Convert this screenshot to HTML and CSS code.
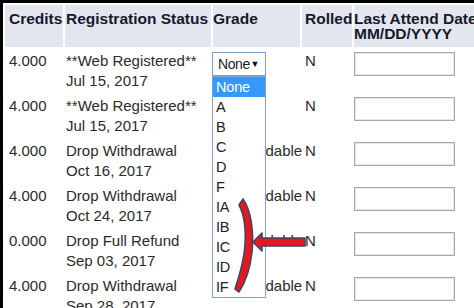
FILE: index.html
```html
<!DOCTYPE html>
<html lang="en">
<head>
<meta charset="UTF-8">
<meta name="viewport" content="width=device-width, initial-scale=1.0">
<title>Registration - Grades</title>
<link rel="stylesheet" href="styles.css">
</head>
<body>

<table class="reg-table">
  <thead>
    <tr>
      <th class="col-credits">Credits</th>
      <th class="col-status">Registration Status</th>
      <th class="col-grade">Grade</th>
      <th class="col-rolled">Rolled</th>
      <th class="col-attend">Last Attend Date<br>MM/DD/YYYY</th>
    </tr>
  </thead>
  <tbody>
    <tr>
      <td class="credits">4.000</td>
      <td class="status">**Web Registered**<br>Jul 15, 2017</td>
      <td class="grade">
        <div class="grade-select is-open">
          <span>None</span><span class="caret">&#9660;</span>
          <!-- open dropdown list -->
          <ul class="grade-list">
            <li class="selected">None</li>
            <li>A</li>
            <li>B</li>
            <li>C</li>
            <li>D</li>
            <li>F</li>
            <li>IA</li>
            <li>IB</li>
            <li>IC</li>
            <li>ID</li>
            <li>IF</li>
          </ul>
        </div>
      </td>
      <td class="rolled">N</td>
      <td class="attend"><input type="text" class="date-input"></td>
    </tr>
    <tr>
      <td class="credits">4.000</td>
      <td class="status">**Web Registered**<br>Jul 15, 2017</td>
      <td class="grade">
        <div class="grade-select"><span>None</span><span class="caret">&#9660;</span></div>
      </td>
      <td class="rolled">N</td>
      <td class="attend"><input type="text" class="date-input"></td>
    </tr>
    <tr>
      <td class="credits">4.000</td>
      <td class="status">Drop Withdrawal<br>Oct 16, 2017</td>
      <td class="grade">Not Gradable</td>
      <td class="rolled">N</td>
      <td class="attend"><input type="text" class="date-input"></td>
    </tr>
    <tr>
      <td class="credits">4.000</td>
      <td class="status">Drop Withdrawal<br>Oct 24, 2017</td>
      <td class="grade">Not Gradable</td>
      <td class="rolled">N</td>
      <td class="attend"><input type="text" class="date-input"></td>
    </tr>
    <tr>
      <td class="credits">0.000</td>
      <td class="status">Drop Full Refund<br>Sep 03, 2017</td>
      <td class="grade">Not Gradable</td>
      <td class="rolled">N</td>
      <td class="attend"><input type="text" class="date-input"></td>
    </tr>
    <tr>
      <td class="credits">4.000</td>
      <td class="status">Drop Withdrawal<br>Sep 28, 2017</td>
      <td class="grade">Not Gradable</td>
      <td class="rolled">N</td>
      <td class="attend"><input type="text" class="date-input"></td>
    </tr>
  </tbody>
</table>

<!-- red annotation arrows drawn over the page -->
<svg class="annotation" width="474" height="308" viewBox="0 0 474 308">
  <path d="M243 199 C251 210, 254 232, 252 252 C250 270, 245 283, 239 292 L235 289 C239 277, 244 262, 245 245 C246 228, 244 214, 239 205 Z"
        fill="#e8161e" stroke="#3d4766" stroke-width="1.6" stroke-linejoin="round"/>
  <path d="M253 242 L262 233 L262 238 L305 238 L305 246 L262 246 L262 251 Z"
        fill="#e8161e" stroke="#3d4766" stroke-width="1.6" stroke-linejoin="round"/>
</svg>

</body>
</html>
```

FILE: styles.css
```css
html, body {
    margin: 0;
    height: 100%;
    overflow: hidden;
    background: #fff;
  }
  body {
    position: relative;
    font-family: "Liberation Sans", Arial, sans-serif;
  }
  .reg-table {
    border: 3px solid #000;
    border-spacing: 2px;
    table-layout: fixed;
    width: 499px;
    font-size: 15px;
    color: #2b2b2b;
  }
  .reg-table th {
    box-sizing: border-box;
    background-color: #e3e6ef;
    color: #141a2c;
    font-size: 15.5px;
    font-weight: bold;
    line-height: 15px;
    text-align: left;
    vertical-align: top;
    padding: 6px 1px;
    white-space: nowrap;
  }
  .reg-table td {
    vertical-align: top;
    padding: 2px 1px 1px;
    line-height: 20px;
    white-space: nowrap;
  }
  .col-credits { width: 58px; }
  .col-status { width: 146px; }
  .col-grade { width: 87px; }
  .col-rolled { width: 50px; }
  .col-attend { width: 140px; }

  .reg-table .col-credits,
  .reg-table .credits {
    padding-left: 4px;
  }
  .reg-table .col-grade,
  .reg-table .grade,
  .reg-table .col-attend,
  .reg-table .attend {
    padding-left: 0;
  }
  .reg-table .col-rolled,
  .reg-table .rolled {
    padding-left: 3px;
  }

  /* grade select box */
  .grade-select {
    position: relative;
    box-sizing: border-box;
    width: 54px;
    height: 24px;
    margin: 1px 0 0 -1px;
    padding: 0 6px 0 5px;
    border: 1px solid #7b9ed4;
    background: #fff;
    color: #222;
    font-size: 14px;
    letter-spacing: -0.4px;
    display: flex;
    align-items: center;
    justify-content: space-between;
    line-height: 20px;
  }
  .caret {
    font-size: 9px;
    color: #111;
  }
  .grade-list {
    display: none;
  }
  .grade-select.is-open .grade-list {
    display: block;
    position: absolute; /* sits over the rows below */
    z-index: 2;
    top: 23px;
    left: -1px;
    box-sizing: border-box;
    width: 54px;
    margin: 0;
    padding: 0;
    list-style: none;
    background: #fff;
    border: 1px solid #86a2c8;
    font-size: 14.5px;
    letter-spacing: -0.2px;
  }
  .grade-list li {
    height: 20px;
    line-height: 20px;
    padding-left: 3px;
    color: #222;
  }
  .grade-list li.selected {
    background-color: #3399ff;
    color: #fff;
  }

  .date-input {
    display: block;
    box-sizing: border-box;
    width: 101px;
    height: 24px;
    margin: 1px 0 0;
    border: 1px solid #a8a8a8;
    box-shadow: inset 0 0 0 1px #e6e6e6;
    background: #fff;
  }

  .annotation {
    position: absolute; /* overlay on top of table */
    left: 0;
    top: 0;
    z-index: 3;
    pointer-events: none;
  }
```
